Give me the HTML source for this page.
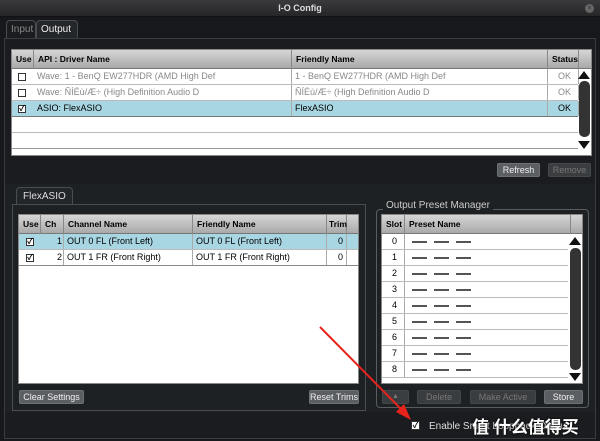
<!DOCTYPE html>
<html><head><meta charset="utf-8"><style>
*{margin:0;padding:0;box-sizing:border-box}
body{width:600px;height:441px;background:#17181b;font-family:"Liberation Sans","Noto Sans CJK SC",sans-serif;font-size:9px;position:relative;overflow:hidden;color:#000}
.a{position:absolute}
.title{left:0;top:0;width:600px;height:17px;background:linear-gradient(#3a3a3c,#262628);border-bottom:1px solid #111;color:#ddd;font-weight:bold;text-align:center;line-height:17px;font-size:9px}
.panel{left:4px;top:38px;width:592px;height:401px;border:1px solid #3a3d40;background:#1b1c1f}
.tab{height:18px;border:1px solid #4a4d50;border-bottom:none;border-radius:4px 4px 0 0;line-height:17px;padding-left:4px;font-size:10px}
.tbl{background:#fff;border:1px solid #888}
.hdr{background:linear-gradient(#d6d6d6,#a9a9a9);height:19px;border-bottom:1px solid #777}
.hc{position:absolute;top:0;height:19px;line-height:19px;font-weight:bold;padding-left:4px;border-right:1px solid #888;font-size:8.5px}
.row{position:absolute;left:0;right:0;height:16px;border-bottom:1px solid #bbb;line-height:15px}
.sel{background:#a9d6e3}
.c{position:absolute;top:0;height:15px;padding-left:3px;border-right:1px solid #aaa;white-space:nowrap;overflow:hidden}
.cb{position:absolute;width:8px;height:8px;border:1px solid #333;background:#fff;top:4px;font-size:8px;line-height:6px;text-align:center;font-weight:bold}
.btn{position:absolute;height:14px;background:#5b5f63;border:1px solid #6d7176;border-radius:2px;color:#eee;text-align:center;line-height:12px;font-size:9px}
.dis{background:#3a3d40;border-color:#45484b;color:#777}
.gray{color:#888}
.thumb{position:absolute;background:#333;border-radius:5px}
.d{position:absolute;top:7px;height:2px;width:15px;background:#555}
.up,.dn{position:absolute;right:1px;width:0;height:0;border-left:6px solid transparent;border-right:6px solid transparent}
.up{border-bottom:8px solid #111}
.dn{border-top:8px solid #111}
</style></head><body>
<div class="a title">I-O Config</div>
<div class="a" style="right:6px;top:4px;width:9px;height:9px;border-radius:50%;background:#666;color:#333;font-size:7px;line-height:9px;text-align:center">×</div>
<div class="a tab" style="left:6px;top:20px;width:30px;color:#888;background:#1b1c1f">Input</div>
<div class="a tab" style="left:36px;top:20px;width:42px;color:#eee;background:#24272a">Output</div>
<div class="a panel"></div>

<div class="a tbl" style="left:11px;top:49px;width:581px;height:107px">
 <div class="hdr"></div>
 <div class="hc" style="left:0;width:22px">Use</div>
 <div class="hc" style="left:22px;width:258px">API : Driver Name</div>
 <div class="hc" style="left:280px;width:256px">Friendly Name</div>
 <div class="hc" style="left:536px;width:31px">Status</div>
 <div class="row" style="top:19px;right:13px"><div class="cb" style="left:6px"></div><div class="c gray" style="left:22px;width:258px">Wave: 1 - BenQ EW277HDR (AMD High Def</div><div class="c gray" style="left:280px;width:256px">1 - BenQ EW277HDR (AMD High Def</div><div class="c gray" style="left:536px;width:31px;text-align:center">OK</div></div>
 <div class="row" style="top:35px;right:13px"><div class="cb" style="left:6px"></div><div class="c gray" style="left:22px;width:258px">Wave: ÑÍÉù/Æ÷ (High Definition Audio D</div><div class="c gray" style="left:280px;width:256px">ÑÍÉù/Æ÷ (High Definition Audio D</div><div class="c gray" style="left:536px;width:31px;text-align:center">OK</div></div>
 <div class="row sel" style="top:51px;right:13px;border-bottom-color:#777"><div class="cb" style="left:6px">✓</div><div class="c" style="left:22px;width:258px">ASIO: FlexASIO</div><div class="c" style="left:280px;width:256px">FlexASIO</div><div class="c" style="left:536px;width:31px;text-align:center">OK</div></div>
 <div class="row" style="top:67px;right:13px"></div>
 <div class="row" style="top:83px;right:13px;border-bottom-color:#999"></div>
 <div class="up" style="top:21px"></div>
 <div class="thumb" style="right:1px;top:31px;width:11px;height:56px"></div>
 <div class="dn" style="top:91px"></div>
</div>
<div class="btn" style="left:497px;top:163px;width:43px">Refresh</div>
<div class="btn dis" style="left:548px;top:163px;width:43px">Remove</div>

<div class="a" style="left:5px;top:184px;width:590px;height:228px;background:#1d2124"></div>
<div class="a tab" style="left:16px;top:187px;width:57px;color:#ddd;background:#22262a;padding-left:6px">FlexASIO</div>
<div class="a" style="left:12px;top:204px;width:354px;height:207px;border:1px solid #4a4d50"></div>

<div class="a tbl" style="left:18px;top:214px;width:341px;height:170px">
 <div class="hdr"></div>
 <div class="hc" style="left:0;width:22px">Use</div>
 <div class="hc" style="left:22px;width:23px">Ch</div>
 <div class="hc" style="left:45px;width:129px">Channel Name</div>
 <div class="hc" style="left:174px;width:134px">Friendly Name</div>
 <div class="hc" style="left:308px;width:20px;padding-left:2px">Trim</div>
 <div class="row sel" style="top:19px"><div class="cb" style="left:7px">✓</div><div class="c" style="left:22px;width:23px;text-align:right;padding-right:1px">1</div><div class="c" style="left:45px;width:129px">OUT 0 FL (Front Left)</div><div class="c" style="left:174px;width:134px">OUT 0 FL (Front Left)</div><div class="c" style="left:308px;width:20px;text-align:right;padding-right:3px">0</div></div>
 <div class="row" style="top:35px;border-bottom-color:#888"><div class="cb" style="left:7px">✓</div><div class="c" style="left:22px;width:23px;text-align:right;padding-right:1px">2</div><div class="c" style="left:45px;width:129px">OUT 1 FR (Front Right)</div><div class="c" style="left:174px;width:134px">OUT 1 FR (Front Right)</div><div class="c" style="left:308px;width:20px;text-align:right;padding-right:3px">0</div></div>
</div>
<div class="btn" style="left:19px;top:390px;width:65px">Clear Settings</div>
<div class="btn" style="left:309px;top:390px;width:50px">Reset Trims</div>

<div class="a" style="left:376px;top:209px;width:213px;height:199px;border:1px solid #5a5d60;border-radius:4px"></div>
<div class="a" style="left:383px;top:200px;padding:0 3px;background:#1d2124;color:#ccc;font-size:10px">Output Preset Manager</div>
<div class="a tbl" style="left:381px;top:214px;width:202px;height:170px;overflow:hidden">
 <div class="hdr"></div>
 <div class="hc" style="left:0;width:23px">Slot</div>
 <div class="hc" style="left:23px;width:166px">Preset Name</div>
 <div class="row" style="top:19px;right:14px"><div class="c" style="left:0;width:23px;text-align:center">0</div><i class="d" style="left:30px"></i><i class="d" style="left:52px"></i><i class="d" style="left:74px"></i></div>
 <div class="row" style="top:35px;right:14px"><div class="c" style="left:0;width:23px;text-align:center">1</div><i class="d" style="left:30px"></i><i class="d" style="left:52px"></i><i class="d" style="left:74px"></i></div>
 <div class="row" style="top:51px;right:14px"><div class="c" style="left:0;width:23px;text-align:center">2</div><i class="d" style="left:30px"></i><i class="d" style="left:52px"></i><i class="d" style="left:74px"></i></div>
 <div class="row" style="top:67px;right:14px"><div class="c" style="left:0;width:23px;text-align:center">3</div><i class="d" style="left:30px"></i><i class="d" style="left:52px"></i><i class="d" style="left:74px"></i></div>
 <div class="row" style="top:83px;right:14px"><div class="c" style="left:0;width:23px;text-align:center">4</div><i class="d" style="left:30px"></i><i class="d" style="left:52px"></i><i class="d" style="left:74px"></i></div>
 <div class="row" style="top:99px;right:14px"><div class="c" style="left:0;width:23px;text-align:center">5</div><i class="d" style="left:30px"></i><i class="d" style="left:52px"></i><i class="d" style="left:74px"></i></div>
 <div class="row" style="top:115px;right:14px"><div class="c" style="left:0;width:23px;text-align:center">6</div><i class="d" style="left:30px"></i><i class="d" style="left:52px"></i><i class="d" style="left:74px"></i></div>
 <div class="row" style="top:131px;right:14px"><div class="c" style="left:0;width:23px;text-align:center">7</div><i class="d" style="left:30px"></i><i class="d" style="left:52px"></i><i class="d" style="left:74px"></i></div>
 <div class="row" style="top:147px;right:14px"><div class="c" style="left:0;width:23px;text-align:center">8</div><i class="d" style="left:30px"></i><i class="d" style="left:52px"></i><i class="d" style="left:74px"></i></div>
 <div class="up" style="top:22px"></div>
 <div class="thumb" style="right:1px;top:33px;width:11px;height:122px"></div>
 <div class="dn" style="top:158px"></div>
</div>
<div class="btn dis" style="left:382px;top:390px;width:27px;font-size:7px">▲</div>
<div class="btn dis" style="left:417px;top:390px;width:44px">Delete</div>
<div class="btn dis" style="left:470px;top:390px;width:66px">Make Active</div>
<div class="btn" style="left:544px;top:390px;width:39px">Store</div>

<div class="a" style="left:411px;top:421px;width:9px;height:9px;background:#fff;border:1px solid #333;font-size:8px;line-height:7px;text-align:center;font-weight:bold">✓</div>
<div class="a" style="left:429px;top:421px;color:#ddd;font-size:10px">Enable Smart Loopback Output</div>
<div class="a" style="left:472px;top:413px;color:#fff;font-size:17px;font-weight:bold;text-shadow:0 0 2px #000">值 什么值得买</div>

<svg class="a" style="left:0;top:0" width="600" height="441">
<line x1="320" y1="327" x2="402" y2="410" stroke="#e8231c" stroke-width="2"/>
<polygon points="411,420 396,412 404,404" fill="#e8231c"/>
</svg>
</body></html>
